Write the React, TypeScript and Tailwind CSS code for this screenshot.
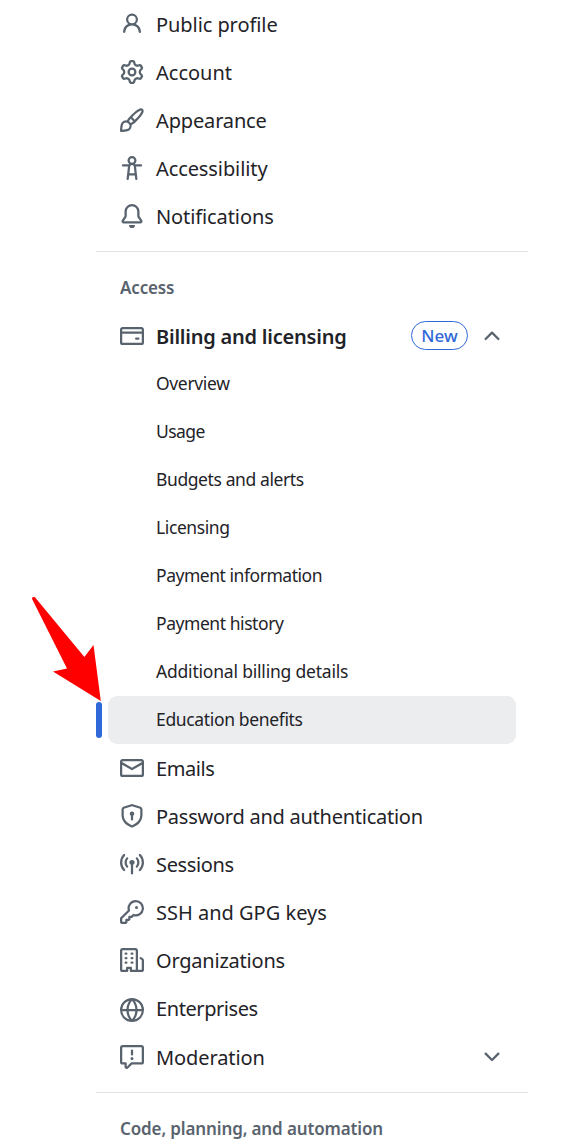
import React from "react";

const paths = {
  person:
    "M10.561 8.073a6.005 6.005 0 0 1 3.432 5.142.75.75 0 1 1-1.498.07 4.5 4.5 0 0 0-8.99 0 .75.75 0 0 1-1.498-.07 6.004 6.004 0 0 1 3.431-5.142 3.999 3.999 0 1 1 5.123 0ZM10.5 5a2.5 2.5 0 1 0-5 0 2.5 2.5 0 0 0 5 0Z",
  gear: "M8 0a8.2 8.2 0 0 1 .701.031C9.444.095 9.99.645 10.16 1.29l.288 1.107c.018.066.079.158.212.224.231.114.454.243.668.386.123.082.233.09.299.071l1.103-.303c.644-.176 1.392.021 1.82.63.27.385.506.792.704 1.218.315.675.111 1.422-.364 1.891l-.814.806c-.049.048-.098.147-.088.294.016.257.016.515 0 .772-.01.147.038.246.088.294l.814.806c.475.469.679 1.216.364 1.891a7.977 7.977 0 0 1-.704 1.217c-.428.61-1.176.807-1.82.63l-1.102-.302c-.067-.019-.177-.011-.3.071a5.909 5.909 0 0 1-.668.386c-.133.066-.194.158-.211.224l-.29 1.106c-.168.646-.715 1.196-1.458 1.26a8.006 8.006 0 0 1-1.402 0c-.743-.064-1.289-.614-1.458-1.26l-.289-1.106c-.018-.066-.079-.158-.212-.224a5.738 5.738 0 0 1-.668-.386c-.123-.082-.233-.09-.299-.071l-1.103.303c-.644.176-1.392-.021-1.82-.63a8.12 8.12 0 0 1-.704-1.218c-.315-.675-.111-1.422.363-1.891l.815-.806c.05-.048.098-.147.088-.294a6.214 6.214 0 0 1 0-.772c.01-.147-.038-.246-.088-.294l-.815-.806C.635 6.045.431 5.298.746 4.623a7.92 7.92 0 0 1 .704-1.217c.428-.61 1.176-.807 1.82-.63l1.102.302c.067.019.177.011.3-.071.214-.143.437-.272.668-.386.133-.066.194-.158.211-.224l.29-1.106C6.009.645 6.556.095 7.299.03 7.53.01 7.764 0 8 0Zm-.571 1.525c-.036.003-.108.036-.137.146l-.289 1.105c-.147.561-.549.967-.998 1.189-.173.086-.34.183-.5.29-.417.278-.97.423-1.529.27l-1.103-.303c-.109-.03-.175.016-.195.045-.22.312-.412.644-.573.99-.014.031-.021.11.059.19l.815.806c.411.406.562.957.53 1.456a4.709 4.709 0 0 0 0 .582c.032.499-.119 1.05-.53 1.456l-.815.806c-.081.08-.073.159-.059.19.162.346.353.677.573.989.02.03.085.076.195.046l1.102-.303c.56-.153 1.113-.008 1.53.27.161.107.328.204.501.29.447.222.85.629.997 1.189l.289 1.105c.029.109.101.143.137.146a6.6 6.6 0 0 0 1.142 0c.036-.003.108-.036.137-.146l.289-1.105c.147-.561.549-.967.998-1.189.173-.086.34-.183.5-.29.417-.278.97-.423 1.529-.27l1.103.303c.109.029.175-.016.195-.045.22-.313.411-.644.573-.99.014-.031.021-.11-.059-.19l-.815-.806c-.411-.406-.562-.957-.53-1.456a4.709 4.709 0 0 0 0-.582c-.032-.499.119-1.05.53-1.456l.815-.806c.081-.08.073-.159.059-.19a6.464 6.464 0 0 0-.573-.989c-.02-.03-.085-.076-.195-.046l-1.102.303c-.56.153-1.113.008-1.53-.27a4.44 4.44 0 0 0-.501-.29c-.447-.222-.85-.629-.997-1.189l-.289-1.105c-.029-.11-.101-.143-.137-.146a6.6 6.6 0 0 0-1.142 0ZM11 8a3 3 0 1 1-6 0 3 3 0 0 1 6 0ZM9.5 8a1.5 1.5 0 1 0-3.001.001A1.5 1.5 0 0 0 9.5 8Z",
  paintbrush:
    "M11.134 1.535c.7-.509 1.416-.942 2.076-1.155.649-.21 1.463-.267 2.069.34.603.601.568 1.411.368 2.07-.202.668-.624 1.39-1.125 2.096-1.011 1.424-2.496 2.987-3.775 4.249-1.098 1.084-2.132 1.839-3.04 2.3a3.744 3.744 0 0 1-1.055 3.217c-.431.431-1.065.691-1.657.861-.614.177-1.294.287-1.914.357A21.151 21.151 0 0 1 .797 16H.743l.007-.75H.749L.742 16a.75.75 0 0 1-.743-.742l.743-.008-.742.007v-.054a21.25 21.25 0 0 1 .13-2.284c.067-.647.187-1.287.358-1.914.17-.591.43-1.226.86-1.657a3.746 3.746 0 0 1 3.227-1.054c.466-.893 1.225-1.907 2.314-2.982 1.271-1.255 2.833-2.75 4.245-3.777ZM1.62 13.089c-.051.464-.086.929-.104 1.395.466-.018.932-.053 1.396-.104a10.511 10.511 0 0 0 1.668-.309c.526-.151.856-.325 1.011-.48a2.25 2.25 0 1 0-3.182-3.182c-.155.155-.329.485-.48 1.01a10.515 10.515 0 0 0-.309 1.67Zm10.396-10.34c-1.224.89-2.605 2.189-3.822 3.384l1.718 1.718c1.21-1.205 2.51-2.597 3.387-3.833.47-.662.78-1.227.912-1.662.134-.444.032-.551.009-.575h-.001V1.78c-.014-.014-.113-.113-.548.027-.432.14-.995.462-1.655.942Zm-4.832 7.266-.001.001a9.859 9.859 0 0 0 1.63-1.142L7.155 7.216a9.7 9.7 0 0 0-1.161 1.607c.482.302.889.71 1.19 1.192Z",
  accessibility:
    "M9.923 5.302c.063.063.122.129.178.198H14A.75.75 0 0 1 14 7h-3.3l.578 5.163.362 2.997a.75.75 0 0 1-1.49.18L9.868 13H6.132l-.282 2.34a.75.75 0 0 1-1.49-.18l.362-2.997L5.3 7H2a.75.75 0 0 1 0-1.5h3.9a2.54 2.54 0 0 1 .176-.198 3 3 0 1 1 3.847 0ZM9.2 7.073h-.001a1.206 1.206 0 0 0-2.398 0L6.305 11.5h3.39ZM9.5 3a1.5 1.5 0 1 0-3.001.001A1.5 1.5 0 0 0 9.5 3Z",
  bell: "M8 16a2 2 0 0 0 1.985-1.75c.017-.137-.097-.25-.235-.25h-3.5c-.138 0-.252.113-.235.25A2 2 0 0 0 8 16ZM3 5a5 5 0 0 1 10 0v2.947c0 .05.015.098.042.139l1.703 2.555A1.519 1.519 0 0 1 13.482 13H2.518a1.516 1.516 0 0 1-1.263-2.36l1.703-2.554A.255.255 0 0 0 3 7.947Zm5-3.5A3.5 3.5 0 0 0 4.5 5v2.947c0 .346-.102.683-.294.97l-1.703 2.556a.017.017 0 0 0-.003.01l.001.006c0 .002.002.004.004.006l.006.004.007.001h10.964l.007-.001.006-.004.004-.006.001-.007a.017.017 0 0 0-.003-.01l-1.703-2.554a1.745 1.745 0 0 1-.294-.97V5A3.5 3.5 0 0 0 8 1.5Z",
  card: "M10.75 9a.75.75 0 0 0 0 1.5h1.5a.75.75 0 0 0 0-1.5h-1.5ZM0 3.75C0 2.784.784 2 1.75 2h12.5c.966 0 1.75.784 1.75 1.75v8.5A1.75 1.75 0 0 1 14.25 14H1.75A1.75 1.75 0 0 1 0 12.25ZM14.5 6.5h-13v5.75c0 .138.112.25.25.25h12.5a.25.25 0 0 0 .25-.25Zm0-2.75a.25.25 0 0 0-.25-.25H1.75a.25.25 0 0 0-.25.25V5h13Z",
  mail: "M1.75 2h12.5c.966 0 1.75.784 1.75 1.75v8.5A1.75 1.75 0 0 1 14.25 14H1.75A1.75 1.75 0 0 1 0 12.25v-8.5C0 2.784.784 2 1.75 2ZM1.5 12.251c0 .138.112.25.25.25h12.5a.25.25 0 0 0 .25-.25V5.809L8.38 9.397a.75.75 0 0 1-.76 0L1.5 5.809v6.442Zm13-8.181v-.32a.25.25 0 0 0-.25-.25H1.75a.25.25 0 0 0-.25.25v.32L8 7.88Z",
  shield:
    "m8.533.133 5.25 1.68A1.75 1.75 0 0 1 15 3.48V7c0 1.566-.32 3.182-1.303 4.682-.983 1.498-2.585 2.813-5.032 3.855a1.697 1.697 0 0 1-1.33 0c-2.447-1.042-4.049-2.357-5.032-3.855C1.32 10.182 1 8.566 1 7V3.48a1.75 1.75 0 0 1 1.217-1.667l5.25-1.68a1.748 1.748 0 0 1 1.066 0Zm-.61 1.429.001.001-5.25 1.68a.251.251 0 0 0-.174.237V7c0 1.36.275 2.666 1.057 3.859.784 1.194 2.121 2.342 4.366 3.298a.196.196 0 0 0 .154 0c2.245-.957 3.582-2.103 4.366-3.297C13.225 9.666 13.5 8.358 13.5 7V3.48a.25.25 0 0 0-.174-.238l-5.25-1.68a.25.25 0 0 0-.153 0ZM9.5 6.5c0 .536-.286 1.032-.75 1.3v2.45a.75.75 0 0 1-1.5 0V7.8A1.5 1.5 0 1 1 9.5 6.5Z",
  broadcast:
    "M8.75 8.582v5.668a.75.75 0 0 1-1.5 0V8.582a1.75 1.75 0 1 1 1.5 0Zm3.983-7.125a.75.75 0 0 1 1.06.026A7.976 7.976 0 0 1 16 7c0 2.139-.84 4.083-2.207 5.517a.75.75 0 1 1-1.086-1.034A6.474 6.474 0 0 0 14.5 7a6.474 6.474 0 0 0-1.793-4.483.75.75 0 0 1 .026-1.06Zm-9.466 0c.3.286.312.76.026 1.06A6.474 6.474 0 0 0 1.5 7a6.47 6.47 0 0 0 1.793 4.483.75.75 0 0 1-1.086 1.034A7.973 7.973 0 0 1 0 7c0-2.139.84-4.083 2.207-5.517a.75.75 0 0 1 1.06-.026Zm8.556 2.321A4.988 4.988 0 0 1 13 7a4.988 4.988 0 0 1-1.177 3.222.75.75 0 1 1-1.146-.967A3.487 3.487 0 0 0 11.5 7c0-.86-.309-1.645-.823-2.255a.75.75 0 0 1 1.146-.967Zm-6.492.958A3.48 3.48 0 0 0 4.5 7a3.48 3.48 0 0 0 .823 2.255.75.75 0 0 1-1.146.967A4.981 4.981 0 0 1 3 7a4.982 4.982 0 0 1 1.188-3.236.75.75 0 1 1 1.143.972Z",
  key: "M10.5 0a5.499 5.499 0 1 1-1.288 10.848l-.932.932a.749.749 0 0 1-.53.22H7v.75a.749.749 0 0 1-.22.53l-.5.5a.749.749 0 0 1-.53.22H5v.75a.749.749 0 0 1-.22.53l-.5.5a.749.749 0 0 1-.53.22h-2A1.75 1.75 0 0 1 0 14.25v-2c0-.199.079-.389.22-.53l4.932-4.932A5.5 5.5 0 0 1 10.5 0Zm-4 5.5c-.001.431.069.86.205 1.269a.75.75 0 0 1-.181.768L1.5 12.56v1.69c0 .138.112.25.25.25h1.69l.06-.06v-1.19a.75.75 0 0 1 .75-.75h1.19l.06-.06v-1.19a.75.75 0 0 1 .75-.75h1.19l1.023-1.025a.75.75 0 0 1 .768-.18A4 4 0 1 0 6.5 5.5ZM11 6a1 1 0 1 1 0-2 1 1 0 0 1 0 2Z",
  organization:
    "M1.75 16A1.75 1.75 0 0 1 0 14.25V1.75C0 .784.784 0 1.75 0h8.5C11.216 0 12 .784 12 1.75v12.5c0 .085-.006.168-.018.25h2.268a.25.25 0 0 0 .25-.25V8.285a.25.25 0 0 0-.111-.208l-1.055-.703a.749.749 0 1 1 .832-1.248l1.055.703c.487.325.779.871.779 1.456v5.965A1.75 1.75 0 0 1 14.25 16h-3.5a.766.766 0 0 1-.197-.026c-.099.017-.2.026-.303.026h-3a.75.75 0 0 1-.75-.75V14h-1v1.25a.75.75 0 0 1-.75.75Zm-.25-1.75c0 .138.112.25.25.25H4v-1.25a.75.75 0 0 1 .75-.75h2.5a.75.75 0 0 1 .75.75v1.25h2.25a.25.25 0 0 0 .25-.25V1.75a.25.25 0 0 0-.25-.25h-8.5a.25.25 0 0 0-.25.25ZM3.75 6h.5a.75.75 0 0 1 0 1.5h-.5a.75.75 0 0 1 0-1.5ZM3 3.75A.75.75 0 0 1 3.75 3h.5a.75.75 0 0 1 0 1.5h-.5A.75.75 0 0 1 3 3.75Zm4 3A.75.75 0 0 1 7.75 6h.5a.75.75 0 0 1 0 1.5h-.5A.75.75 0 0 1 7 6.75ZM7.75 3h.5a.75.75 0 0 1 0 1.5h-.5a.75.75 0 0 1 0-1.5ZM3 9.75A.75.75 0 0 1 3.75 9h.5a.75.75 0 0 1 0 1.5h-.5A.75.75 0 0 1 3 9.75ZM7.75 9h.5a.75.75 0 0 1 0 1.5h-.5a.75.75 0 0 1 0-1.5Z",
  globe:
    "M8 0a8 8 0 1 1 0 16A8 8 0 0 1 8 0ZM5.78 8.75a9.64 9.64 0 0 0 1.363 4.177c.255.426.542.832.857 1.215.245-.296.551-.705.857-1.215A9.64 9.64 0 0 0 10.22 8.75Zm4.44-1.5a9.64 9.64 0 0 0-1.363-4.177c-.307-.51-.612-.919-.857-1.215a9.927 9.927 0 0 0-.857 1.215A9.64 9.64 0 0 0 5.78 7.25Zm-5.944 1.5H1.543a6.507 6.507 0 0 0 4.666 5.5c-.123-.181-.24-.365-.352-.552-.715-1.192-1.437-2.874-1.581-4.948Zm-2.733-1.5h2.733c.144-2.074.866-3.756 1.58-4.948.12-.197.237-.381.353-.552a6.507 6.507 0 0 0-4.666 5.5Zm10.181 1.5c-.144 2.074-.866 3.756-1.58 4.948-.12.197-.237.381-.353.552a6.507 6.507 0 0 0 4.666-5.5Zm2.733-1.5a6.507 6.507 0 0 0-4.666-5.5c.123.181.24.365.353.552.714 1.192 1.436 2.874 1.58 4.948Z",
  report:
    "M0 1.75C0 .784.784 0 1.75 0h12.5C15.216 0 16 .784 16 1.75v9.5A1.75 1.75 0 0 1 14.25 13H8.06l-2.573 2.573A1.458 1.458 0 0 1 3 14.543V13H1.75A1.75 1.75 0 0 1 0 11.25Zm1.75-.25a.25.25 0 0 0-.25.25v9.5c0 .138.112.25.25.25h2a.75.75 0 0 1 .75.75v2.19l2.72-2.72a.749.749 0 0 1 .53-.22h6.5a.25.25 0 0 0 .25-.25v-9.5a.25.25 0 0 0-.25-.25Zm7 2.25v2.5a.75.75 0 0 1-1.5 0v-2.5a.75.75 0 0 1 1.5 0ZM9 9a1 1 0 1 1-2 0 1 1 0 0 1 2 0Z",
  up: "M3.22 10.53a.749.749 0 0 1 0-1.06l4.25-4.25a.749.749 0 0 1 1.06 0l4.25 4.25a.749.749 0 1 1-1.06 1.06L8 6.811 4.28 10.53a.749.749 0 0 1-1.06 0Z",
  down: "M12.78 5.22a.749.749 0 0 1 0 1.06l-4.25 4.25a.749.749 0 0 1-1.06 0L3.22 6.28a.749.749 0 1 1 1.06-1.06L8 8.939l3.72-3.719a.749.749 0 0 1 1.06 0Z",
};

type IconName = keyof typeof paths;

function Icon({ name, className = "" }: { name: IconName; className?: string }) {
  return (
    <svg viewBox="0 0 16 16" fill="currentColor" className={`size-6 shrink-0 text-[#59636e] ${className}`}>
      <path d={paths[name]} />
    </svg>
  );
}

interface ItemProps {
  icon: IconName;
  label: string;
  text?: string;
  className?: string;
  iconClass?: string;
  children?: React.ReactNode;
}

function Item({ icon, label, text = "", className = "", iconClass = "", children }: ItemProps) {
  return (
    <li className={`flex h-12 items-center pr-6 pl-3 ${className}`}>
      <Icon name={icon} className={iconClass} />
      <span className={`mt-0.5 ml-3 text-[20px] leading-[30px] whitespace-nowrap ${text}`}>{label}</span>
      {children}
    </li>
  );
}

function SubItem({ label, text = "", active = false }: { label: string; text?: string; active?: boolean }) {
  return (
    <li
      className={`relative flex h-12 items-center rounded-[9px] pl-12 ${active ? "bg-[#ebedef]" : ""}`}
    >
      {active && <span className="absolute top-1.5 -left-3 h-9 w-1.5 rounded-full bg-[#2f68d8]" />}
      <span className={`mb-0.5 text-[17.5px] leading-6 whitespace-nowrap ${text}`}>{label}</span>
    </li>
  );
}

function Heading({ label, text = "" }: { label: string; text?: string }) {
  return (
    <h3 className={`pl-3 text-[17px] leading-6 font-semibold whitespace-nowrap text-[#59636e] ${text}`}>{label}</h3>
  );
}

export default function App() {
  return (
    <div className="relative h-[1144px] w-[576px] overflow-hidden bg-white font-['Noto_Sans',sans-serif] text-[#1f2328]">
      <nav className="ml-24 w-[432px]">
        <ul className="mx-3">
          <Item icon="person" label="Public profile" text="tracking-[-0.07px]" />
          <Item icon="gear" label="Account" />
          <Item icon="paintbrush" label="Appearance" text="tracking-[-0.15px]" />
          <Item icon="accessibility" label="Accessibility" text="tracking-[-0.1px]" />
          <Item icon="bell" label="Notifications" text="tracking-[-0.1px]" />
        </ul>
        <hr className="mt-[11px] border-[#dfe2e6]" />
        <div className="mx-3 mt-6">
          <Heading label="Access" text="tracking-[-0.15px]" />
          <ul className="mt-3">
            <Item icon="card" label="Billing and licensing" text="font-semibold tracking-[-0.22px]">
              <span className="mr-3 mb-0.5 ml-auto flex h-[29px] w-[57px] items-center justify-center rounded-full border border-[#2f68d8] pt-0.5 text-[17px] font-medium text-[#2f68d8]">
                New
              </span>
              <Icon name="up" className="-mr-3" />
            </Item>
            <SubItem label="Overview" text="tracking-[-0.35px]" />
            <SubItem label="Usage" text="tracking-[-0.55px]" />
            <SubItem label="Budgets and alerts" text="tracking-[-0.4px]" />
            <SubItem label="Licensing" text="tracking-[-0.4px]" />
            <SubItem label="Payment information" text="tracking-[-0.46px]" />
            <SubItem label="Payment history" text="tracking-[-0.44px]" />
            <SubItem label="Additional billing details" text="tracking-[-0.2px]" />
            <SubItem label="Education benefits" text="tracking-[-0.35px]" active />
            <Item icon="mail" label="Emails" text="tracking-[-0.4px]" />
            <Item icon="shield" label="Password and authentication" text="tracking-[-0.25px]" />
            <Item icon="broadcast" label="Sessions" text="tracking-[-0.35px]" />
            <Item icon="key" label="SSH and GPG keys" />
            <Item icon="organization" label="Organizations" text="tracking-[-0.22px]" />
            <Item
              icon="globe"
              label="Enterprises"
              text="tracking-[-0.42px] mt-0!"
              className="mt-px"
              iconClass="mt-0.5"
            />
            <Item icon="report" label="Moderation" text="tracking-[-0.1px]">
              <Icon name="down" className="-mr-3 ml-auto" />
            </Item>
          </ul>
        </div>
        <hr className="mt-[11px] border-[#dfe2e6]" />
        <div className="mx-3 mt-6">
          <Heading label="Code, planning, and automation" text="tracking-[-0.13px]" />
        </div>
      </nav>
      <svg viewBox="0 0 80 110" className="absolute top-[594px] left-7 h-[110px] w-20" fill="#ff0000">
        <path d="M4.2 5.3Q3.6 3 5.8 3Q7 2.8 8 4.4L56.4 63 65.5 51 72.8 107 25 77.5 39 74.5Z" />
      </svg>
    </div>
  );
}
